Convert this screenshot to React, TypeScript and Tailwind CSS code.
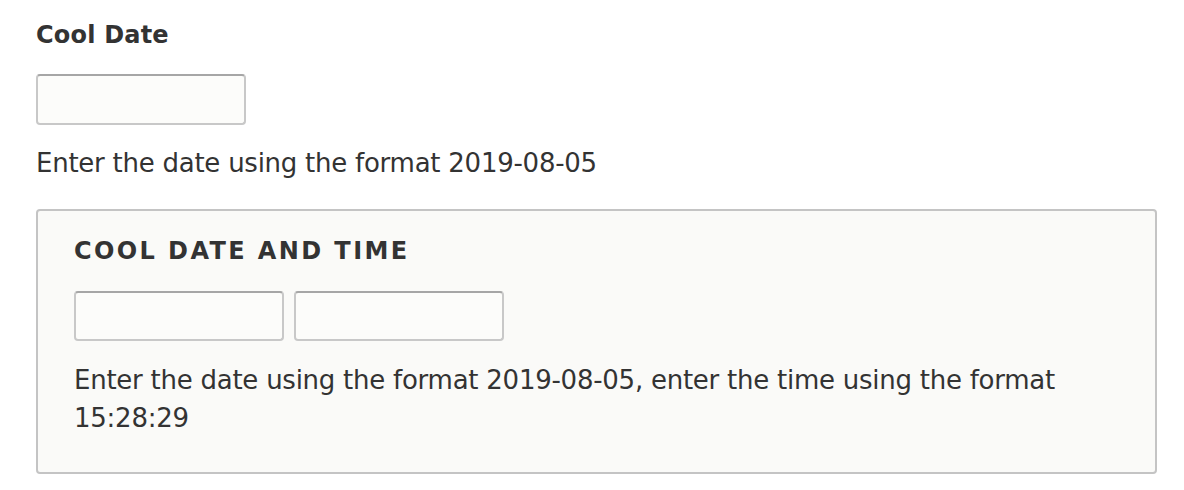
import React from 'react';

export default function App() {
  return (
    <div className="min-h-screen bg-white pl-9 pr-[27px] pt-[18px] font-['DejaVu_Sans',sans-serif] text-[#333]">
      <div className="text-[24px] font-bold leading-[35px] tracking-[0.2px]">Cool Date</div>
      <input
        type="text"
        className="mt-[21px] block h-[51px] w-[210px] rounded-[4px] border-2 border-[#c8c8c8] border-t-[#a6a6a6] bg-[#fcfcfa] outline-none"
      />
      <p className="mt-[20px] text-[26px] leading-[36px] tracking-[-0.25px]">Enter the date using the format 2019-08-05</p>

      <div className="mt-[28px] h-[265px] rounded-[4px] border-2 border-[#c4c4c4] bg-[#fafaf8] pl-[36px] pr-[36px] pt-[24px]">
        <div className="text-[24px] font-bold uppercase leading-[32px] tracking-[0.1em]">Cool Date and Time</div>
        <div className="mt-[24px] flex gap-[10px]">
          <input
            type="text"
            className="block h-[50px] w-[210px] rounded-[4px] border-2 border-[#c8c8c8] border-t-[#a6a6a6] bg-[#fcfcfa] outline-none"
          />
          <input
            type="text"
            className="block h-[50px] w-[210px] rounded-[4px] border-2 border-[#c8c8c8] border-t-[#a6a6a6] bg-[#fcfcfa] outline-none"
          />
        </div>
        <p className="mt-[20px] text-[26px] leading-[38px] tracking-[-0.25px]">
          Enter the date using the format 2019-08-05, enter the time using the format 15:28:29
        </p>
      </div>
    </div>
  );
}
